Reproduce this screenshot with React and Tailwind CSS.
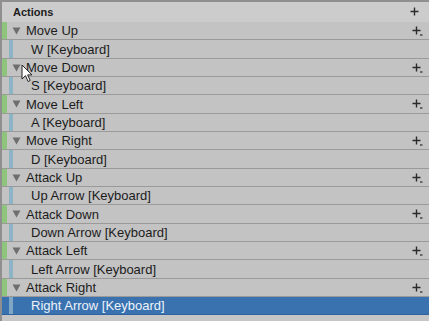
const actions = [
  ['Move Up', 'W [Keyboard]'],
  ['Move Down', 'S [Keyboard]'],
  ['Move Left', 'A [Keyboard]'],
  ['Move Right', 'D [Keyboard]'],
  ['Attack Up', 'Up Arrow [Keyboard]'],
  ['Attack Down', 'Down Arrow [Keyboard]'],
  ['Attack Left', 'Left Arrow [Keyboard]'],
  ['Attack Right', 'Right Arrow [Keyboard]'],
];

// row heights spread 18.33px average over integer pixels
const heights = ['h-[18px]', 'h-[19px]', 'h-[18px]', 'h-[18px]', 'h-[19px]', 'h-[18px]', 'h-[18px]', 'h-[19px]', 'h-[18px]', 'h-[18px]', 'h-[19px]', 'h-[18px]', 'h-[18px]', 'h-[19px]', 'h-[18px]', 'h-[18px]'];

function Plus({ menu }) {
  return (
    <svg width="11" height="10" viewBox="0 0 11 10" className="shrink-0">
      <path d="M4.5 0.5v8M0.5 4.5h8" stroke="#2a2a2a" strokeWidth="1.4" />
      {menu && <path d="M8 9h2.5" stroke="#2a2a2a" strokeWidth="1.2" />}
    </svg>
  );
}

function Triangle() {
  return (
    <svg width="9" height="8" viewBox="0 0 9 8" className="shrink-0">
      <path d="M0.5 0.5h8L4.5 7.5z" fill="#6e6e6e" />
    </svg>
  );
}

export default function App() {
  return (
    <div className="relative h-[321px] w-[429px] overflow-hidden border-t-2 border-l-2 border-[#8f8f8f] bg-[#c6c6c6] font-['Liberation_Sans',Arial,sans-serif] text-[13px] text-[#1c1c1c]">
      <div className="flex h-[20px] items-center justify-between bg-[#cccccc] pl-[11px] pr-[8px]">
        <span className="text-[11px] font-bold">Actions</span>
        <Plus />
      </div>

      {actions.map(([name, binding], i) => {
        const last = i === actions.length - 1;
        return (
          <div key={name}>
            <div className={`flex ${heights[i * 2]} items-center border-b border-[#9a9a9a] bg-[#c3c3c3] pr-[6px]`}>
              <div className="w-[5px] self-stretch bg-[#8fc47c]" />
              <div className="ml-[5px]">
                <Triangle />
              </div>
              <span className="ml-[5px] flex-1 leading-none">{name}</span>
              <Plus menu />
            </div>
            <div
              className={`flex ${heights[i * 2 + 1]} items-center border-b ${
                last ? 'border-[#2f62a0] bg-[#3a72b0] text-[#eef3fa]' : 'border-[#9a9a9a] bg-[#c3c3c3]'
              }`}
            >
              <div className="w-[7px] self-stretch" />
              <div className={`w-[4px] self-stretch ${last ? 'bg-[#7fa6c4]' : 'bg-[#8db4c6]'}`} />
              <span className="ml-[18px] leading-none">{binding}</span>
            </div>
          </div>
        );
      })}

      <svg width="12" height="19" viewBox="0 0 12 19" className="absolute left-[19px] top-[62px]">
        <path d="M1 1v14l3.5-3.3 2.6 5.8 2.1-1-2.6-5.6H11z" fill="#ffffff" stroke="#222222" strokeWidth="1" strokeLinejoin="round" />
      </svg>
    </div>
  );
}
